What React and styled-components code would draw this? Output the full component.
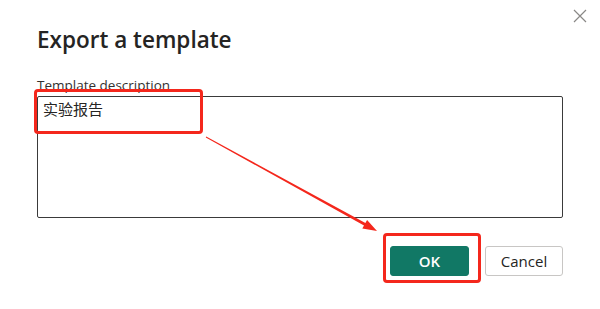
import styled, { createGlobalStyle } from 'styled-components'

const GlobalStyle = createGlobalStyle`
  html, body {
    margin: 0;
    padding: 0;
    background: #ffffff;
  }
  body {
    font-family: "Open Sans", "Noto Sans CJK SC", sans-serif;
  }
`

const Dialog = styled.div`
  position: relative;
  width: 600px;
  height: 309px;
  box-sizing: border-box;
  padding: 25px 37px 0 37px;
  display: flex;
  flex-direction: column;
  background: #fff;
  overflow: hidden;
`

const CloseButton = styled.button`
  position: absolute;
  top: 8px;
  right: 12px;
  width: 16px;
  height: 16px;
  padding: 0;
  border: none;
  background: transparent;
  display: flex;
  align-items: center;
  justify-content: center;
  cursor: pointer;
`

const Title = styled.h1`
  margin: 0;
  font-family: "Open Sans", sans-serif;
  font-size: 22.5px;
  line-height: 30px;
  font-weight: 600;
  color: #252423;
`

const Label = styled.label`
  margin-top: 21px;
  font-size: 13.5px;
  line-height: 18px;
  color: #323130;
`

const TextArea = styled.div`
  margin-top: 2px;
  height: 122px;
  box-sizing: border-box;
  border: 1.5px solid #3a3a3a;
  border-radius: 2px;
  padding: 2px 5px;
  font-family: "Noto Sans CJK SC", sans-serif;
  font-size: 15px;
  line-height: 20px;
  color: #252423;
`

const Footer = styled.div`
  margin-top: 28px;
  display: flex;
  justify-content: flex-end;
  gap: 16px;
`

const Button = styled.button`
  width: ${p => p.$w}px;
  height: 30px;
  box-sizing: border-box;
  border-radius: 3px;
  font-family: "Open Sans", sans-serif;
  font-size: 15px;
  cursor: pointer;
  border: 1px solid ${p => (p.$primary ? '#117865' : '#c8c6c4')};
  background: ${p => (p.$primary ? '#117865' : '#ffffff')};
  color: ${p => (p.$primary ? '#ffffff' : '#252423')};
  font-weight: ${p => (p.$primary ? 600 : 400)};
`

const Highlight = styled.div`
  position: absolute;
  left: ${p => p.$x}px;
  top: ${p => p.$y}px;
  width: ${p => p.$w}px;
  height: ${p => p.$h}px;
  box-sizing: border-box;
  border: 3px solid #f4271c;
  border-radius: 4px;
  pointer-events: none;
`

const ArrowLayer = styled.svg`
  position: absolute;
  left: 0;
  top: 0;
  width: 600px;
  height: 309px;
  pointer-events: none;
`

export default function App() {
  return (
    <>
      <GlobalStyle />
      <Dialog>
        <CloseButton aria-label="Close">
          <svg width="14" height="14" viewBox="0 0 14 14">
            <path d="M1 1 L13 13 M13 1 L1 13" stroke="#8a8886" strokeWidth="1.2" fill="none" />
          </svg>
        </CloseButton>
        <Title>Export a template</Title>
        <Label>Template description</Label>
        <TextArea>实验报告</TextArea>
        <Footer>
          <Button $primary $w={79}>OK</Button>
          <Button $w={78}>Cancel</Button>
        </Footer>

        <Highlight $x={34} $y={89} $w={169} $h={45} />
        <Highlight $x={383} $y={233} $w={98} $h={50} />
        <ArrowLayer viewBox="0 0 600 309">
          <polygon
            points="206.2,136.6 365.4,222.9 367.1,219.9 377,231 362.3,228.6 364,225.6 205.8,137.4"
            fill="#f4271c"
          />
        </ArrowLayer>
      </Dialog>
    </>
  )
}
